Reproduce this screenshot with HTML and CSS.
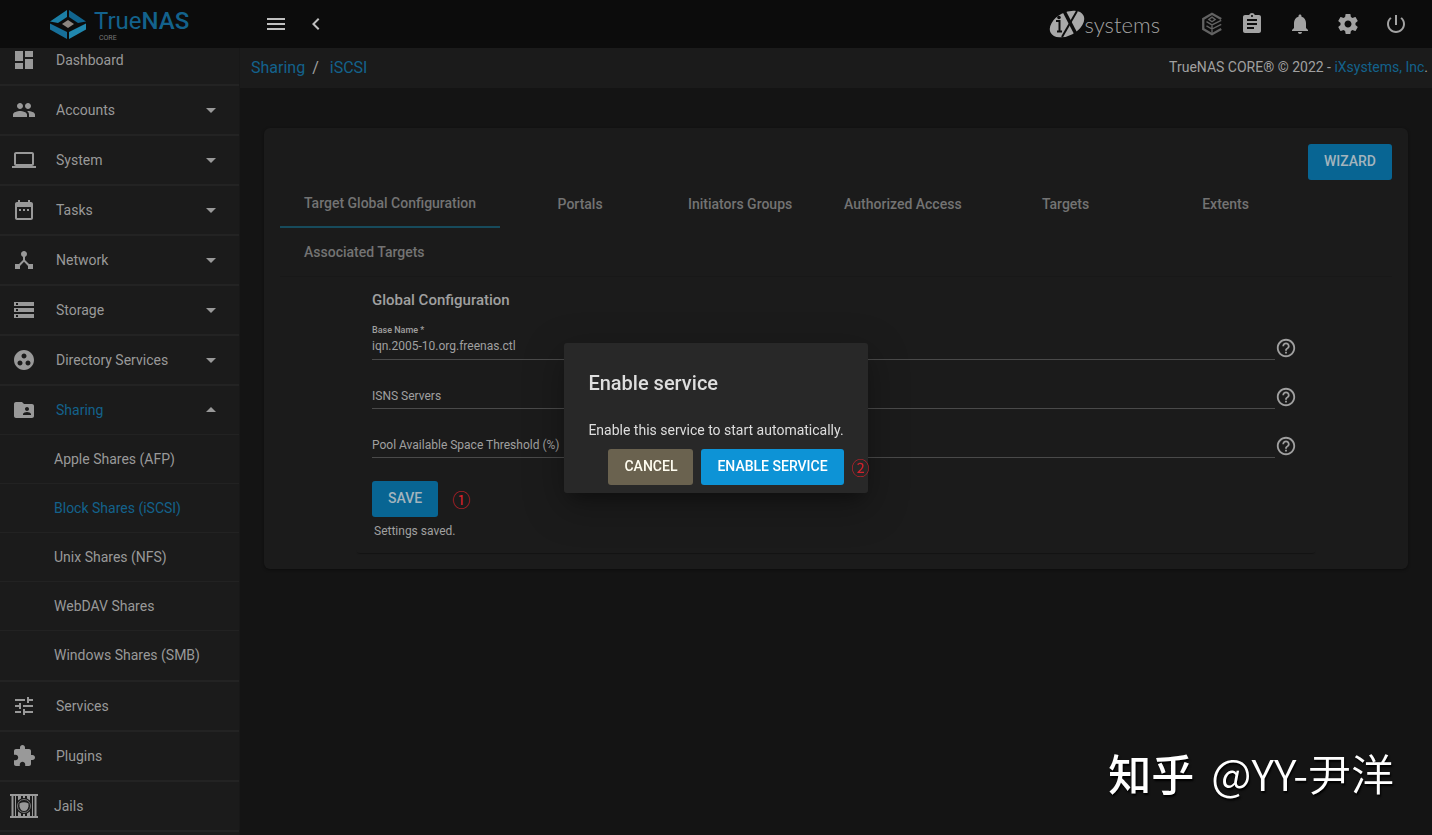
FILE: index.html
```html
<!DOCTYPE html>
<html lang="en">
<head>
  <meta charset="UTF-8">
  <title>TrueNAS - iSCSI</title>
  <meta name="viewport" content="width=device-width, initial-scale=1.0">
  <link rel="stylesheet" href="styles.css">
</head>
<body>
<header class="topbar">
  <a class="brand" href="#">
    <svg class="brand-mark" viewBox="0 0 36 29">
      <path fill="#1c7fa6" d="M0 11.500 17 0v7L8 13z"/>
      <path fill="#11658f" d="M19 0l17 11.500L28 13 19 7z"/>
      <path fill="#176f99" d="M0 13.500l17 8.500v7L0 19.500z"/>
      <path fill="#2087ae" d="M36 13.500L19 22v7l17-9.500z"/>
      <path fill="#8c8580" d="M18 10l6 4-6 4-6-4z"/>
    </svg>
    <span class="brand-name"><span>True<b>NAS</b></span><small>CORE</small></span>
  </a>
  <div class="topbar-left">
    <button class="icon-btn menu-btn" aria-label="Toggle menu"><svg viewBox="0 0 24 24"><path d="M3 18h18v-2H3v2zm0-5h18v-2H3v2zm0-7v2h18V6H3z"/></svg></button>
    <button class="icon-btn menu-btn" aria-label="Collapse menu"><svg viewBox="0 0 24 24"><path d="M15.410 7.410L14 6l-6 6 6 6 1.410-1.410L10.830 12z"/></svg></button>
  </div>
  <div class="topbar-right">
    <a class="ix" href="#">
      <svg class="ix-mark" viewBox="0 0 36 28">
        <ellipse cx="18" cy="14" rx="18.500" ry="11.500" transform="rotate(-28 18 14)" fill="#a8a8a8"/>
        <path d="M15 1l13 25" stroke="#0c0c0c" stroke-width="3.500"/>
        <path d="M28 1L13 27" stroke="#0c0c0c" stroke-width="2"/>
        <path d="M7 11h3.500v10M8 21.500h5" stroke="#0c0c0c" stroke-width="2" fill="none"/>
        <circle cx="10" cy="7.500" r="1.800" fill="#0c0c0c"/>
      </svg>
      <span class="ix-name">systems</span>
    </a>
    <button class="icon-btn command-btn" aria-label="TrueCommand">
      <svg viewBox="0 0 24 26" fill="none" stroke="#626262">
        <path stroke-width="2.500" d="M22 7.500L12 2 2.500 7.500v11L12 24l10-5.500"/>
        <path stroke-width="1.500" d="M12 24V14M6 10.500l6 3.500 10-5M6 15l6 3.500 10-5M12 5.500l3.500 2.500-3.500 2.500L8.500 8z"/>
      </svg>
    </button>
    <button class="icon-btn" aria-label="Tasks"><svg viewBox="0 0 24 24"><path d="M19 3h-4.180C14.400 1.840 13.300 1 12 1c-1.300 0-2.400.84-2.820 2H5c-1.100 0-2 .9-2 2v14c0 1.100.9 2 2 2h14c1.100 0 2-.9 2-2V5c0-1.100-.9-2-2-2zm-7 0c.55 0 1 .45 1 1s-.45 1-1 1-1-.45-1-1 .45-1 1-1zm2 14H7v-2h7v2zm3-4H7v-2h10v2zm0-4H7V7h10v2z"/></svg></button>
    <button class="icon-btn" aria-label="Alerts"><svg viewBox="0 0 24 24"><path d="M12 22c1.100 0 2-.9 2-2h-4c0 1.100.89 2 2 2zm6-6v-5c0-3.070-1.640-5.640-4.500-6.320V4c0-.83-.67-1.500-1.500-1.500s-1.500.67-1.500 1.500v.68C7.630 5.360 6 7.920 6 11v5l-2 2v1h16v-1l-2-2z"/></svg></button>
    <button class="icon-btn" aria-label="Settings"><svg viewBox="0 0 24 24"><path d="M19.430 12.980c.04-.32.07-.64.07-.98s-.03-.66-.07-.98l2.110-1.650c.19-.15.24-.42.12-.64l-2-3.460c-.12-.22-.39-.3-.61-.22l-2.490 1c-.52-.4-1.080-.73-1.690-.98l-.38-2.650C14.460 2.180 14.250 2 14 2h-4c-.25 0-.46.18-.49.42l-.38 2.650c-.61.25-1.170.59-1.690.98l-2.490-1c-.23-.09-.49 0-.61.22l-2 3.460c-.13.22-.07.49.12.64l2.110 1.650c-.04.32-.07.65-.07.98s.03.66.07.98l-2.110 1.650c-.19.15-.24.42-.12.64l2 3.460c.12.22.39.3.61.22l2.490-1c.52.4 1.080.73 1.690.98l.38 2.650c.03.24.24.42.49.42h4c.25 0 .46-.18.49-.42l.38-2.650c.61-.25 1.170-.59 1.690-.98l2.490 1c.23.09.49 0 .61-.22l2-3.460c.12-.22.07-.49-.12-.64l-2.110-1.650zM12 15.500c-1.930 0-3.500-1.570-3.500-3.500s1.570-3.500 3.500-3.500 3.500 1.570 3.500 3.500-1.570 3.500-3.500 3.500z"/></svg></button>
    <button class="icon-btn" aria-label="Power"><svg viewBox="0 0 24 24"><path d="M13 3h-2v10h2V3zm4.830 2.170l-1.420 1.420C17.990 7.860 19 9.810 19 12c0 3.870-3.130 7-7 7s-7-3.130-7-7c0-2.190 1.010-4.140 2.580-5.420L6.170 5.170C4.230 6.820 3 9.260 3 12c0 4.970 4.030 9 9 9s9-4.030 9-9c0-2.740-1.230-5.180-3.170-6.830z"/></svg></button>
  </div>
</header>

<div class="layout">
  <nav class="sidebar">
    <ul class="nav">
      <li><a href="#"><svg viewBox="0 0 24 24"><path d="M3 13h8V3H3v10zm0 8h8v-6H3v6zm10 0h8V11h-8v10zm0-18v6h8V3h-8z"/></svg><span>Dashboard</span></a></li>
      <li><a href="#"><svg viewBox="0 0 24 24"><path d="M16 11c1.660 0 2.990-1.340 2.990-3S17.660 5 16 5c-1.660 0-3 1.340-3 3s1.340 3 3 3zm-8 0c1.660 0 2.990-1.340 2.990-3S9.660 5 8 5C6.340 5 5 6.340 5 8s1.340 3 3 3zm0 2c-2.330 0-7 1.170-7 3.500V19h14v-2.500c0-2.330-4.670-3.500-7-3.500zm8 0c-.29 0-.62.02-.97.05 1.160.84 1.970 1.970 1.970 3.450V19h6v-2.500c0-2.330-4.670-3.500-7-3.500z"/></svg><span>Accounts</span><svg class="caret" viewBox="0 0 24 24"><path d="M7 10l5 5 5-5z"/></svg></a></li>
      <li><a href="#"><svg viewBox="0 0 24 24"><path d="M20 18c1.100 0 1.990-.9 1.990-2L22 6c0-1.100-.9-2-2-2H4c-1.100 0-2 .9-2 2v10c0 1.100.9 2 2 2H0v2h24v-2h-4zM4 6h16v10H4V6z"/></svg><span>System</span><svg class="caret" viewBox="0 0 24 24"><path d="M7 10l5 5 5-5z"/></svg></a></li>
      <li><a href="#"><svg viewBox="0 0 24 24"><path d="M9 11H7v2h2v-2zm4 0h-2v2h2v-2zm4 0h-2v2h2v-2zm2-7h-1V2h-2v2H8V2H6v2H5c-1.110 0-1.990.9-1.990 2L3 20c0 1.100.89 2 2 2h14c1.100 0 2-.9 2-2V6c0-1.100-.9-2-2-2zm0 16H5V9h14v11z"/></svg><span>Tasks</span><svg class="caret" viewBox="0 0 24 24"><path d="M7 10l5 5 5-5z"/></svg></a></li>
      <li><a href="#"><svg viewBox="0 0 24 24"><path d="M17 16l-4-4V8.820C14.160 8.400 15 7.300 15 6c0-1.660-1.340-3-3-3S9 4.340 9 6c0 1.300.84 2.400 2 2.820V12l-4 4H3v5h5v-3.050l4-4.200 4 4.200V21h5v-5h-4z"/></svg><span>Network</span><svg class="caret" viewBox="0 0 24 24"><path d="M7 10l5 5 5-5z"/></svg></a></li>
      <li><a href="#"><svg viewBox="0 0 24 24"><path d="M2 20h20v-4H2v4zm2-3h2v2H4v-2zM2 4v4h20V4H2zm4 3H4V5h2v2zm-4 7h20v-4H2v4zm2-3h2v2H4v-2z"/></svg><span>Storage</span><svg class="caret" viewBox="0 0 24 24"><path d="M7 10l5 5 5-5z"/></svg></a></li>
      <li><a href="#"><svg viewBox="0 0 24 24"><path d="M12 2C6.480 2 2 6.480 2 12s4.480 10 10 10 10-4.480 10-10S17.520 2 12 2zM8 17.500c-1.380 0-2.500-1.120-2.500-2.500s1.120-2.500 2.500-2.500 2.500 1.120 2.500 2.500-1.120 2.500-2.500 2.500zM9.500 8c0-1.380 1.120-2.500 2.500-2.500s2.500 1.120 2.500 2.500-1.120 2.500-2.500 2.500S9.500 9.380 9.500 8zm6.500 9.500c-1.380 0-2.500-1.120-2.500-2.500s1.120-2.500 2.500-2.500 2.500 1.120 2.500 2.500-1.120 2.500-2.500 2.500z"/></svg><span>Directory Services</span><svg class="caret" viewBox="0 0 24 24"><path d="M7 10l5 5 5-5z"/></svg></a></li>
      <li class="open">
        <a href="#" class="active"><svg viewBox="0 0 24 24"><path d="M20 6h-8l-2-2H4c-1.100 0-1.990.9-1.990 2L2 18c0 1.100.9 2 2 2h16c1.100 0 2-.9 2-2V8c0-1.100-.9-2-2-2zm-5 3c1.100 0 2 .9 2 2s-.9 2-2 2-2-.9-2-2 .9-2 2-2zm4 8h-8v-1c0-1.330 2.670-2 4-2s4 .67 4 2v1z"/></svg><span>Sharing</span><svg class="caret" viewBox="0 0 24 24"><path d="M7 14l5-5 5 5z"/></svg></a>
        <ul class="subnav">
          <li><a href="#">Apple Shares (AFP)</a></li>
          <li><a href="#" class="active">Block Shares (iSCSI)</a></li>
          <li><a href="#">Unix Shares (NFS)</a></li>
          <li><a href="#">WebDAV Shares</a></li>
          <li><a href="#">Windows Shares (SMB)</a></li>
        </ul>
      </li>
      <li><a href="#"><svg viewBox="0 0 24 24"><path d="M3 17v2h6v-2H3zM3 5v2h10V5H3zm10 16v-2h8v-2h-8v-2h-2v6h2zM7 9v2H3v2h4v2h2V9H7zm14 4v-2H11v2h10zm-6-4h2V7h4V5h-4V3h-2v6z"/></svg><span>Services</span></a></li>
      <li><a href="#"><svg viewBox="0 0 24 24"><path d="M20.500 11H19V7c0-1.100-.9-2-2-2h-4V3.500C13 2.120 11.880 1 10.500 1S8 2.120 8 3.500V5H4c-1.100 0-1.990.9-1.990 2v3.800H3.500c1.490 0 2.700 1.210 2.700 2.700s-1.210 2.700-2.700 2.700H2V20c0 1.100.9 2 2 2h3.800v-1.500c0-1.490 1.210-2.700 2.700-2.700 1.490 0 2.700 1.210 2.700 2.700V22H17c1.100 0 2-.9 2-2v-4h1.500c1.380 0 2.500-1.120 2.500-2.500S21.880 11 20.500 11z"/></svg><span>Plugins</span></a></li>
      <li class="jails"><a href="#">
        <svg viewBox="0 0 28 24">
          <path d="M0 0h28v2H0zM0 22h28v2H0zM1.500 2h2v20h-2zM5 2h1v20H5zM8 2h3v20H8zM13 2h2v20h-2zM17 2h3v20h-3zM22 2h1v20h-1zM24.500 2h2v20h-2z"/>
          <circle cx="14" cy="12" r="8" fill="#1b1b1b"/>
          <circle cx="14" cy="12" r="6.500" fill="none" stroke="#777" stroke-width="1"/>
          <path d="M9.500 9.500q4.500-2.500 9 0v3q-1 4.500-4.500 4.500t-4.500-4.500z"/>
        </svg><span>Jails</span></a></li>
    </ul>
  </nav>

  <main class="content">
    <div class="crumbs">
      <div class="crumb-path"><a href="#">Sharing</a><span>/</span><a href="#">iSCSI</a></div>
      <div class="copyright">TrueNAS CORE® © 2022 - <a href="#">iXsystems, Inc</a>.</div>
    </div>

    <section class="card">
      <div class="card-actions"><button class="btn">WIZARD</button></div>
      <div class="tabs">
        <a href="#" class="tab selected">Target Global Configuration</a>
        <a href="#" class="tab">Portals</a>
        <a href="#" class="tab">Initiators Groups</a>
        <a href="#" class="tab">Authorized Access</a>
        <a href="#" class="tab">Targets</a>
        <a href="#" class="tab">Extents</a>
        <a href="#" class="tab">Associated Targets</a>
      </div>

      <form class="config">
        <h4>Global Configuration</h4>
        <div class="field filled">
          <label for="basename">Base Name *</label>
          <input type="text" id="basename" value="iqn.2005-10.org.freenas.ctl">
          <svg viewBox="0 0 24 24"><path d="M11 18h2v-2h-2v2zm1-16C6.480 2 2 6.480 2 12s4.480 10 10 10 10-4.480 10-10S17.520 2 12 2zm0 18c-4.410 0-8-3.590-8-8s3.590-8 8-8 8 3.590 8 8-3.590 8-8 8zm0-14c-2.210 0-4 1.790-4 4h2c0-1.100.9-2 2-2s2 .9 2 2c0 2-3 1.750-3 5h2c0-2.250 3-2.500 3-5 0-2.210-1.790-4-4-4z"/></svg>
        </div>
        <div class="field">
          <label for="isns">ISNS Servers</label>
          <input type="text" id="isns">
          <svg viewBox="0 0 24 24"><path d="M11 18h2v-2h-2v2zm1-16C6.480 2 2 6.480 2 12s4.480 10 10 10 10-4.480 10-10S17.520 2 12 2zm0 18c-4.410 0-8-3.590-8-8s3.590-8 8-8 8 3.590 8 8-3.590 8-8 8zm0-14c-2.210 0-4 1.790-4 4h2c0-1.100.9-2 2-2s2 .9 2 2c0 2-3 1.750-3 5h2c0-2.250 3-2.500 3-5 0-2.210-1.790-4-4-4z"/></svg>
        </div>
        <div class="field">
          <label for="threshold">Pool Available Space Threshold (%)</label>
          <input type="text" id="threshold">
          <svg viewBox="0 0 24 24"><path d="M11 18h2v-2h-2v2zm1-16C6.480 2 2 6.480 2 12s4.480 10 10 10 10-4.480 10-10S17.520 2 12 2zm0 18c-4.410 0-8-3.590-8-8s3.590-8 8-8 8 3.590 8 8-3.590 8-8 8zm0-14c-2.210 0-4 1.790-4 4h2c0-1.100.9-2 2-2s2 .9 2 2c0 2-3 1.750-3 5h2c0-2.250 3-2.500 3-5 0-2.210-1.790-4-4-4z"/></svg>
        </div>
        <div class="form-actions">
          <button type="button" class="btn">SAVE</button>
          <span class="step">①</span>
        </div>
        <p class="saved">Settings saved.</p>
      </form>
    </section>
  </main>
</div>

<div class="overlay">
  <div class="dialog" role="dialog" aria-labelledby="dialog-title">
    <h1 id="dialog-title">Enable service</h1>
    <p>Enable this service to start automatically.</p>
    <div class="dialog-actions">
      <button class="btn btn-cancel">CANCEL</button>
      <button class="btn btn-primary">ENABLE SERVICE</button>
    </div>
    <span class="step step-two">②</span>
  </div>
</div>

<div class="watermark"><b>知乎</b><span>@YY-尹洋</span></div>
</body>
</html>
```

FILE: styles.css
```css
* {
  box-sizing: border-box;
}
body {
  margin: 0;
  height: 100vh;
  display: flex;
  flex-direction: column;
  overflow: hidden;
  background: #141414;
  color: #a0a0a0;
  font-family: Roboto, "Noto Sans CJK SC", sans-serif;
  font-size: 14px;
}
a {
  color: #13628c;
  text-decoration: none;
}
ul {
  list-style: none;
  margin: 0;
  padding: 0;
}
svg {
  display: block;
  flex: none;
  fill: currentColor;
}

/* top bar */
.topbar {
  flex: none;
  display: flex;
  height: 48px;
  background: #0c0c0c;
}
.brand {
  width: 240px;
  padding-left: 50px;
  display: flex;
  align-items: center;
  gap: 8px;
  color: #13628c;
}
.brand-mark {
  width: 36px;
  height: 29px;
}
.brand-name {
  display: flex;
  flex-direction: column;
  padding-top: 1px;
  font-size: 24px;
  line-height: 26px;
}
.brand-name b {
  font-weight: 500;
}
.brand-name small {
  padding-left: 5px;
  font-size: 7px;
  line-height: 8px;
  color: #777;
}
.topbar-left {
  display: flex;
  padding-left: 16px;
}
.topbar-right {
  display: flex;
  margin-left: auto;
  padding-right: 12px;
}
.icon-btn {
  width: 48px;
  padding: 0;
  border: none;
  background: none;
  color: #a3a3a3;
  display: flex;
  align-items: center;
  justify-content: center;
}
.icon-btn svg {
  width: 24px;
  height: 24px;
}
.menu-btn {
  width: 40px;
  color: #c0c0c0;
}
.command-btn {
  width: 32px;
}
.command-btn svg {
  fill: none;
}
.ix {
  display: flex;
  align-items: center;
  margin-right: 36px;
  color: #a3a3a3;
}
.ix-mark {
  width: 36px;
  height: 28px;
}
.ix-name {
  font-family: Lato, sans-serif;
  font-weight: 300;
  font-size: 22px;
}

/* side menu */
.layout {
  flex: 1;
  min-height: 0;
  display: flex;
}
.sidebar {
  flex: none;
  width: 240px;
  overflow: hidden;
  background: #1b1b1b;
  border-right: 1px solid #181818;
}
.nav {
  margin-top: -12px;
}
.nav > li {
  border-bottom: 2px solid #232323;
}
.nav > li > a {
  display: flex;
  align-items: center;
  gap: 20px;
  height: 48px;
  padding: 0 16px 0 12px;
  color: #999;
}
.nav > li > a svg {
  width: 24px;
  height: 24px;
  color: #999;
}
.nav > li > a .caret {
  margin-left: auto;
}
.nav > li > a.active,
.subnav a.active {
  color: #13628c;
}
.nav > .jails > a {
  padding-left: 10px;
  gap: 16px;
}
.nav > .jails > a svg {
  width: 28px;
}
.nav > .open {
  padding-bottom: 1px;
}
.subnav a {
  display: block;
  height: 49px;
  line-height: 48px;
  padding-left: 54px;
  border-top: 1px solid #222;
  color: #999;
}

/* page */
.content {
  flex: 1;
  min-width: 0;
}
.crumbs {
  display: flex;
  justify-content: space-between;
  align-items: center;
  height: 40px;
  padding: 0 4px 2px 11px;
  background: #1b1b1b;
}
.crumb-path {
  display: flex;
  gap: 7px;
  font-size: 16px;
}
.crumb-path span {
  margin-right: 4px;
}
.card {
  margin: 40px 24px;
  padding: 16px;
  border-radius: 6px;
  background: #1b1b1b;
  box-shadow: 0 1px 3px rgba(0,0,0,0.4);
}
.card-actions {
  display: flex;
  justify-content: flex-end;
}
.btn {
  height: 36px;
  padding: 0 16px 2px;
  border: none;
  border-radius: 3px;
  background: #086593;
  color: #a3b4bd;
  font-family: inherit;
  font-size: 14px;
  font-weight: 500;
  cursor: pointer;
}
.tabs {
  display: flex;
  flex-wrap: wrap;
  border-bottom: 1px solid #181818;
}
.tab {
  min-width: 160px;
  height: 48px;
  padding: 0 24px;
  line-height: 48px;
  text-align: center;
  font-weight: 500;
  color: #737373;
}
.tab.selected {
  line-height: 46px;
  border-bottom: 2px solid #174b5c;
}
.config {
  margin: 0 76px;
  padding: 13px 16px 12px;
  border-radius: 4px;
  box-shadow: 0 2px 1px -1px rgba(0,0,0,0.3);
}
.config h4 {
  margin: 0;
  font-size: 15px;
  line-height: 21px;
  font-weight: 500;
}
.field {
  display: grid;
  grid-template-columns: 1fr 22px;
  grid-template-rows: 24px 25px;
  padding-right: 3px;
  font-size: 12px;
}
.field label {
  grid-area: 2 / 1;
  line-height: 24px;
}
.field.filled label {
  grid-area: 1 / 1;
  align-self: end;
  font-size: 9px;
  line-height: 10px;
  font-weight: 500;
}
.field input {
  grid-area: 2 / 1;
  width: 100%;
  padding: 0 0 2px;
  border: none;
  border-bottom: 1px solid #4a4a4a;
  background: none;
  color: #a0a0a0;
  font-family: inherit;
  font-size: 12px;
  outline: none;
}
.field svg {
  grid-area: 2 / 2;
  width: 22px;
  height: 22px;
  align-self: center;
}
.form-actions {
  display: flex;
  align-items: center;
  gap: 14px;
  margin-top: 23px;
}
.saved {
  margin: 4px 2px 0;
  font-size: 12px;
  line-height: 20px;
}
.step {
  color: #d3212c;
  font-family: "Noto Sans CJK SC", sans-serif;
  font-size: 18px;
  line-height: 20px;
}

/* dialog */
.overlay {
  position: fixed;
  inset: 0;
  display: flex;
  align-items: center;
  justify-content: center;
}
.dialog {
  position: relative;
  padding: 24px 24px 8px;
  border-radius: 3px;
  background: #282828;
  box-shadow: 0 11px 15px -7px rgba(0,0,0,0.3), 0 12px 38px 3px rgba(0,0,0,0.25);
  color: #dedede;
}
.dialog h1 {
  margin: 0 0 21px;
  font-size: 20px;
  line-height: 32px;
  font-weight: 500;
}
.dialog p {
  margin: 0 0 9px;
  line-height: 20px;
}
.dialog-actions {
  display: flex;
  justify-content: flex-end;
  gap: 8px;
}
.btn-cancel {
  background: #6a624f;
  color: #fffdf0;
}
.btn-primary {
  background: #0d93d6;
  color: #fff;
}
.step-two {
  position: absolute;
  right: -2px;
  bottom: 16px;
}

.watermark {
  position: fixed;
  right: 38px;
  bottom: 31px;
  display: flex;
  gap: 17px;
  font-family: "Noto Sans CJK SC", sans-serif;
  font-size: 43px;
  line-height: 64px;
  color: #fff;
  text-shadow: 1px 2px 2px #000;
}
.watermark b {
  font-weight: 500;
}
.watermark span {
  font-weight: 350;
}
```
